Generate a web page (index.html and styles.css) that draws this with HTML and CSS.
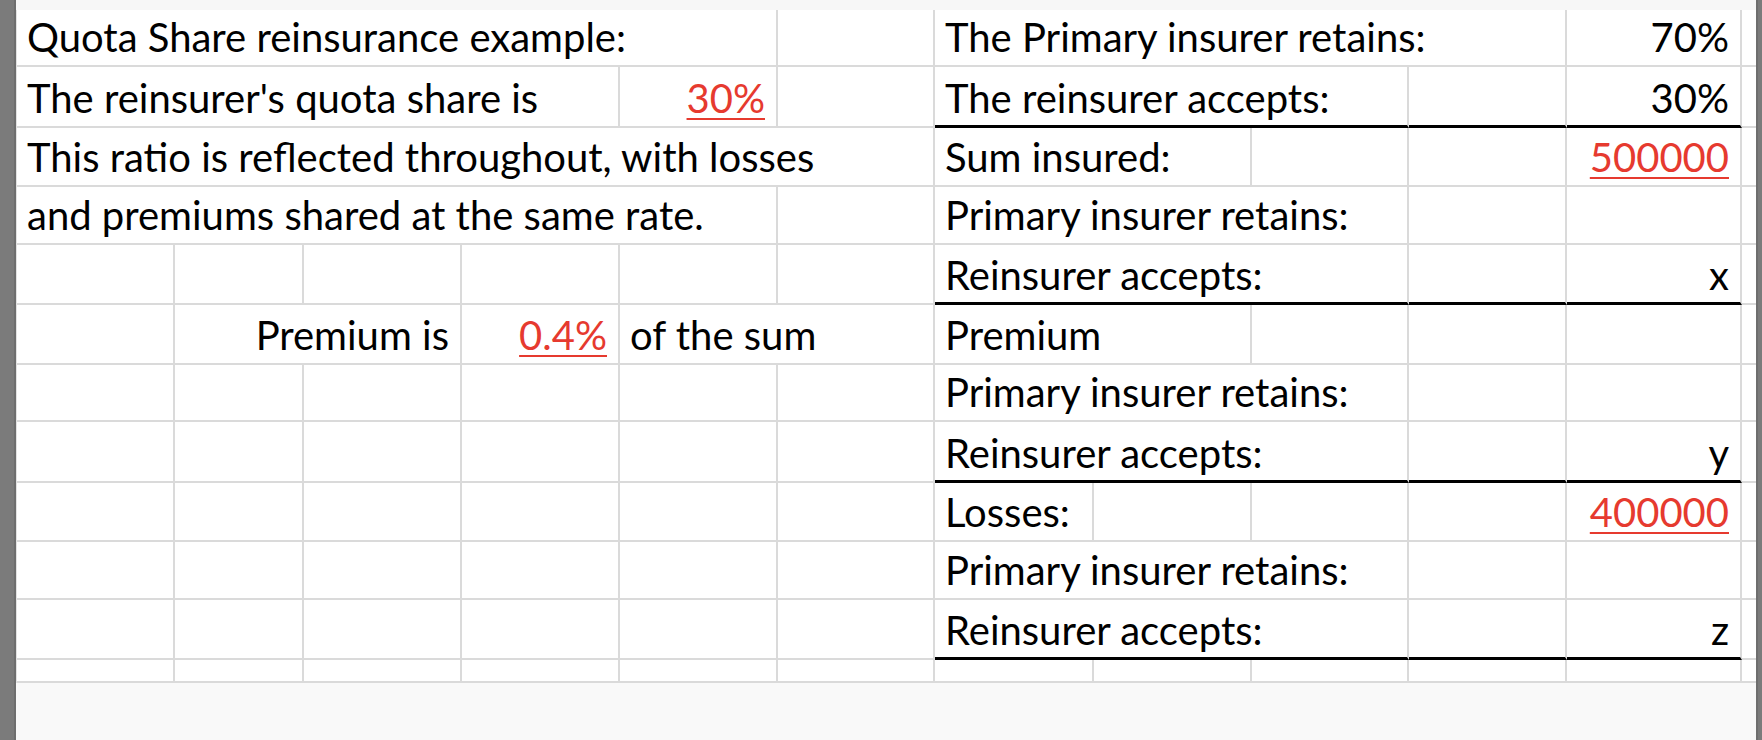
FILE: index.html
```html
<!DOCTYPE html>
<html lang="en">
<head>
<meta charset="utf-8">
<title>Quota Share reinsurance example</title>
<link rel="stylesheet" href="styles.css">
</head>
<body>
<div class="frame">
  <div class="bar bar-left"></div>
  <div class="main">
    <div class="top-strip"></div>
    <div class="sheet">
      <!-- row 1 -->
      <div class="c s5">Quota Share reinsurance example:</div>
      <div class="c"></div>
      <div class="c s4">The Primary insurer retains:</div>
      <div class="c r">70%</div>
      <div class="c"></div>
      <!-- row 2 -->
      <div class="c s4">The reinsurer's quota share is</div>
      <div class="c r"><span class="in">30%</span></div>
      <div class="c"></div>
      <div class="c s3 tb">The reinsurer accepts:</div>
      <div class="c tb"></div>
      <div class="c r tb">30%</div>
      <div class="c"></div>
      <!-- row 3 -->
      <div class="c s6">This ratio is reflected throughout, with losses</div>
      <div class="c s2">Sum insured:</div>
      <div class="c"></div>
      <div class="c"></div>
      <div class="c r"><span class="in">500000</span></div>
      <div class="c"></div>
      <!-- row 4 -->
      <div class="c s5">and premiums shared at the same rate.</div>
      <div class="c"></div>
      <div class="c s3">Primary insurer retains:</div>
      <div class="c"></div>
      <div class="c"></div>
      <div class="c"></div>
      <!-- row 5 -->
      <div class="c"></div><div class="c"></div><div class="c"></div>
      <div class="c"></div><div class="c"></div><div class="c"></div>
      <div class="c s3 tb">Reinsurer accepts:</div>
      <div class="c tb"></div>
      <div class="c r tb">x</div>
      <div class="c"></div>
      <!-- row 6 -->
      <div class="c"></div>
      <div class="c s2 r">Premium is</div>
      <div class="c r"><span class="in">0.4%</span></div>
      <div class="c s2">of the sum</div>
      <div class="c s2">Premium</div>
      <div class="c"></div>
      <div class="c"></div>
      <div class="c"></div>
      <div class="c"></div>
      <!-- row 7 -->
      <div class="c"></div><div class="c"></div><div class="c"></div>
      <div class="c"></div><div class="c"></div><div class="c"></div>
      <div class="c s3">Primary insurer retains:</div>
      <div class="c"></div>
      <div class="c"></div>
      <div class="c"></div>
      <!-- row 8 -->
      <div class="c"></div><div class="c"></div><div class="c"></div>
      <div class="c"></div><div class="c"></div><div class="c"></div>
      <div class="c s3 tb">Reinsurer accepts:</div>
      <div class="c tb"></div>
      <div class="c r tb">y</div>
      <div class="c"></div>
      <!-- row 9 -->
      <div class="c"></div><div class="c"></div><div class="c"></div>
      <div class="c"></div><div class="c"></div><div class="c"></div>
      <div class="c">Losses:</div>
      <div class="c"></div>
      <div class="c"></div>
      <div class="c"></div>
      <div class="c r"><span class="in">400000</span></div>
      <div class="c"></div>
      <!-- row 10 -->
      <div class="c"></div><div class="c"></div><div class="c"></div>
      <div class="c"></div><div class="c"></div><div class="c"></div>
      <div class="c s3">Primary insurer retains:</div>
      <div class="c"></div>
      <div class="c"></div>
      <div class="c"></div>
      <!-- row 11 -->
      <div class="c"></div><div class="c"></div><div class="c"></div>
      <div class="c"></div><div class="c"></div><div class="c"></div>
      <div class="c s3 tb">Reinsurer accepts:</div>
      <div class="c tb"></div>
      <div class="c r tb">z</div>
      <div class="c"></div>
      <!-- row 12 (partial) -->
      <div class="c"></div><div class="c"></div><div class="c"></div>
      <div class="c"></div><div class="c"></div><div class="c"></div>
      <div class="c"></div><div class="c"></div><div class="c"></div>
      <div class="c"></div><div class="c"></div><div class="c"></div>
    </div>
    <div class="bottom-fill"></div>
  </div>
  <div class="bar bar-right"></div>
</div>
</body>
</html>
```

FILE: styles.css
```css
* { box-sizing: border-box; }

html, body {
  margin: 0;
  padding: 0;
  width: 1762px;
  height: 740px;
  overflow: hidden;
  background: #f9f9f9;
}

.frame {
  display: flex;
  width: 1762px;
  height: 740px;
}

.bar {
  background: #7b7b7b;
  flex: none;
}
.bar-left {
  width: 16px;
  box-shadow: inset -2px 0 0 #6e6e6e;
}
.bar-right {
  width: 7px;
  box-shadow: inset 2px 0 0 #6e6e6e;
}

.main {
  flex: 1;
  display: flex;
  flex-direction: column;
}

.top-strip {
  height: 10px;
  background: #f7f7f7;
  flex: none;
}

.sheet {
  flex: none;
  display: grid;
  grid-template-columns: 158px 129px 158px 158px 158px 157px 159px 158px 157px 158px 175px 14px;
  grid-template-rows: 57px 61px 59px 58px 60px 60px 57px 61px 59px 58px 60px 23px;
  background: #ffffff;
  border-left: 1px solid #e2e2e2;
  font-family: "Lato", "Open Sans", "Liberation Sans", sans-serif;
  font-size: 40px;
  line-height: 1.2;
  color: #000000;
}

.bottom-fill {
  flex: 1;
  background: #f9f9f9;
}

.c {
  display: flex;
  align-items: flex-end;
  border-right: 2px solid #dadada;
  border-bottom: 2px solid #dadada;
  padding: 0 10px 4px 10px;
  white-space: nowrap;
  overflow: visible;
  min-width: 0;
}

.s2 { grid-column: span 2; }
.s3 { grid-column: span 3; }
.s4 { grid-column: span 4; }
.s5 { grid-column: span 5; }
.s6 { grid-column: span 6; }

.r {
  justify-content: flex-end;
  padding-right: 11px;
}

.tb {
  border-bottom: 3px solid #000000;
  padding-bottom: 3px;
}

.in {
  color: #e63a2f;
  text-decoration: underline;
  text-decoration-thickness: 2px;
  text-underline-offset: 5px;
}
```
